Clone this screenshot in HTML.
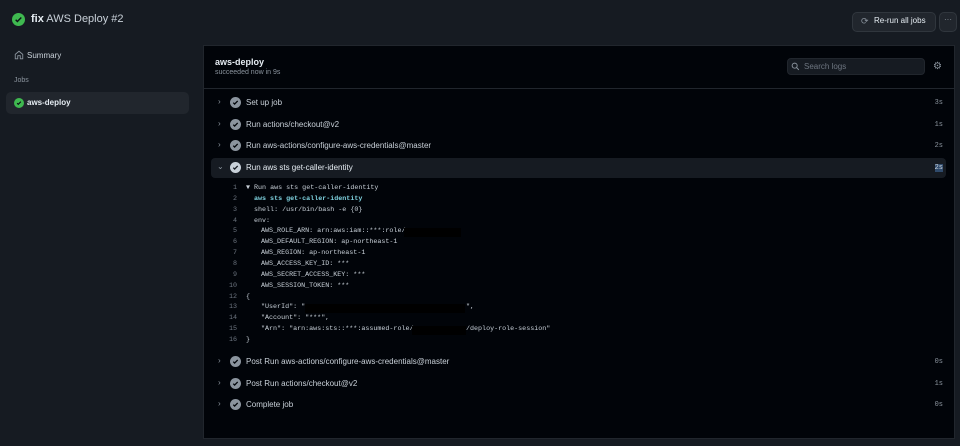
<html><head><style>
body{margin:0;width:960px;height:446px;background:#161b22;font-family:"Liberation Sans",sans-serif;color:#e6edf3;position:relative;overflow:hidden}
.a{position:absolute;white-space:nowrap}
.chk{position:absolute;width:11px;height:11px;border-radius:50%;background:#8b949e}
.chk svg{position:absolute;left:2px;top:2px}
.step{font-size:8px;color:#c9d1d9}
.dur{font-size:7px;color:#8b949e;font-family:"Liberation Mono",monospace;right:17px}
.ln{font-family:"Liberation Mono",monospace;font-size:6.7px;color:#c9d1d9}
.num{font-family:"Liberation Mono",monospace;font-size:6.7px;color:#6e7681;width:16px;text-align:right;left:221px}
.red{position:absolute;background:#000;height:9px}
</style></head><body>
<div class="chk" style="left:12px;top:13px;width:13px;height:13px;background:#3fb950"><svg width="9" height="9" viewBox="0 0 16 16"><path d="M3 8.5l3 3 7-7" stroke="#0d1117" stroke-width="2.5" fill="none"/></svg></div>
<div class="a" style="left:31px;top:13px;font-size:11px;color:#c9d1d9"><b style="color:#e6edf3">fix</b> AWS Deploy #2</div>
<svg class="a" style="left:14px;top:50px" width="10" height="10" viewBox="0 0 16 16"><path d="M2 7l6-5 6 5v7H10V9H6v5H2z" stroke="#8b949e" stroke-width="1.4" fill="none"/></svg>
<div class="a" style="left:27px;top:51px;font-size:8px;color:#c9d1d9">Summary</div>
<div class="a" style="left:14px;top:77px;font-size:7px;color:#8b949e">Jobs</div>
<div class="a" style="left:6px;top:92px;width:183px;height:22px;background:#21262d;border-radius:5px"></div>
<div class="chk" style="left:14px;top:98px;width:10px;height:10px;background:#3fb950"><svg width="6" height="6" viewBox="0 0 16 16"><path d="M3 8.5l3 3 7-7" stroke="#0d1117" stroke-width="3" fill="none"/></svg></div>
<div class="a" style="left:27px;top:98px;font-size:8px;font-weight:bold;color:#e6edf3">aws-deploy</div>
<div class="a" style="left:852px;top:12px;width:82px;height:18px;background:#21262d;border:1px solid #30363d;border-radius:5px"></div>
<div class="a" style="left:861px;top:16px;font-size:9px;color:#8b949e">⟳</div>
<div class="a" style="left:874px;top:16px;font-size:8px;color:#e6edf3">Re-run all jobs</div>
<div class="a" style="left:939px;top:12px;width:16px;height:18px;background:#21262d;border:1px solid #30363d;border-radius:5px;font-size:8px;color:#8b949e;text-align:center;line-height:14px">···</div>
<div class="a" style="left:203px;top:45px;width:752px;height:394px;background:#010409;border:1px solid #21262d;box-sizing:border-box"></div>
<div class="a" style="left:203px;top:88px;width:752px;height:1px;background:#21262d"></div>
<div class="a" style="left:215px;top:57px;font-size:9px;font-weight:bold;color:#e6edf3">aws-deploy</div>
<div class="a" style="left:215px;top:69px;font-size:7px;color:#8b949e">succeeded now in 9s</div>
<div class="a" style="left:787px;top:58px;width:138px;height:17px;background:#161b22;border:1px solid #21262d;border-radius:4px;box-sizing:border-box"></div>
<svg class="a" style="left:791px;top:62px" width="9" height="9" viewBox="0 0 16 16"><circle cx="6.5" cy="6.5" r="4.5" stroke="#8b949e" stroke-width="1.6" fill="none"/><path d="M10 10l4 4" stroke="#8b949e" stroke-width="1.6"/></svg>
<div class="a" style="left:804px;top:62px;font-size:8px;color:#6e7681">Search logs</div>
<div class="a" style="left:933px;top:61px;font-size:10px;color:#8b949e">⚙</div>
<div class="a" style="left:211px;top:158px;width:735px;height:20px;background:#161b22;border-radius:4px"></div>
<div class="a step" style="left:218px;top:97px;color:#8b949e">›</div><div class="chk" style="left:230px;top:97px"><svg width="7" height="7" viewBox="0 0 16 16"><path d="M3 8.5l3 3 7-7" stroke="#010409" stroke-width="3" fill="none"/></svg></div><div class="a step" style="left:246px;top:98px">Set up job</div><div class="a dur" style="top:99px">3s</div>
<div class="a step" style="left:218px;top:119px;color:#8b949e">›</div><div class="chk" style="left:230px;top:119px"><svg width="7" height="7" viewBox="0 0 16 16"><path d="M3 8.5l3 3 7-7" stroke="#010409" stroke-width="3" fill="none"/></svg></div><div class="a step" style="left:246px;top:120px">Run actions/checkout@v2</div><div class="a dur" style="top:121px">1s</div>
<div class="a step" style="left:218px;top:140px;color:#8b949e">›</div><div class="chk" style="left:230px;top:140px"><svg width="7" height="7" viewBox="0 0 16 16"><path d="M3 8.5l3 3 7-7" stroke="#010409" stroke-width="3" fill="none"/></svg></div><div class="a step" style="left:246px;top:141px">Run aws-actions/configure-aws-credentials@master</div><div class="a dur" style="top:142px">2s</div>
<div class="a step" style="left:217px;top:162px;color:#8b949e">⌄</div><div class="chk" style="left:230px;top:162px;background:#c9d1d9"><svg width="7" height="7" viewBox="0 0 16 16"><path d="M3 8.5l3 3 7-7" stroke="#161b22" stroke-width="3" fill="none"/></svg></div><div class="a step" style="left:246px;top:163px;color:#e6edf3">Run aws sts get-caller-identity</div><div class="a dur" style="top:164px;background:#2f4a6b;color:#c9d1d9">2s</div>
<div class="a num" style="top:184px">1</div><div class="a ln" style="left:246px;top:184px">▼ Run aws sts get-caller-identity</div>
<div class="a num" style="top:195px">2</div><div class="a ln" style="left:254px;top:195px;color:#7fd3e0;font-weight:bold">aws sts get-caller-identity</div>
<div class="a num" style="top:206px">3</div><div class="a ln" style="left:254px;top:206px">shell: /usr/bin/bash -e {0}</div>
<div class="a num" style="top:217px">4</div><div class="a ln" style="left:254px;top:217px">env:</div>
<div class="a num" style="top:227px">5</div><div class="a ln" style="left:261px;top:227px">AWS_ROLE_ARN: arn:aws:iam::***:role/</div><div class="red" style="left:404px;top:228px;width:57px"></div>
<div class="a num" style="top:238px">6</div><div class="a ln" style="left:261px;top:238px">AWS_DEFAULT_REGION: ap-northeast-1</div>
<div class="a num" style="top:249px">7</div><div class="a ln" style="left:261px;top:249px">AWS_REGION: ap-northeast-1</div>
<div class="a num" style="top:260px">8</div><div class="a ln" style="left:261px;top:260px">AWS_ACCESS_KEY_ID: ***</div>
<div class="a num" style="top:271px">9</div><div class="a ln" style="left:261px;top:271px">AWS_SECRET_ACCESS_KEY: ***</div>
<div class="a num" style="top:282px">10</div><div class="a ln" style="left:261px;top:282px">AWS_SESSION_TOKEN: ***</div>
<div class="a num" style="top:293px">12</div><div class="a ln" style="left:246px;top:293px">{</div>
<div class="a num" style="top:303px">13</div><div class="a ln" style="left:261px;top:303px">"UserId": "</div><div class="red" style="left:305px;top:304px;width:160px"></div><div class="a ln" style="left:466px;top:303px">",</div>
<div class="a num" style="top:314px">14</div><div class="a ln" style="left:261px;top:314px">"Account": "***",</div>
<div class="a num" style="top:325px">15</div><div class="a ln" style="left:261px;top:325px">"Arn": "arn:aws:sts::***:assumed-role/</div><div class="red" style="left:412px;top:326px;width:54px"></div><div class="a ln" style="left:466px;top:325px">/deploy-role-session"</div>
<div class="a num" style="top:336px">16</div><div class="a ln" style="left:246px;top:336px">}</div>
<div class="a step" style="left:218px;top:356px;color:#8b949e">›</div><div class="chk" style="left:230px;top:356px"><svg width="7" height="7" viewBox="0 0 16 16"><path d="M3 8.5l3 3 7-7" stroke="#010409" stroke-width="3" fill="none"/></svg></div><div class="a step" style="left:246px;top:357px">Post Run aws-actions/configure-aws-credentials@master</div><div class="a dur" style="top:358px">0s</div>
<div class="a step" style="left:218px;top:378px;color:#8b949e">›</div><div class="chk" style="left:230px;top:378px"><svg width="7" height="7" viewBox="0 0 16 16"><path d="M3 8.5l3 3 7-7" stroke="#010409" stroke-width="3" fill="none"/></svg></div><div class="a step" style="left:246px;top:379px">Post Run actions/checkout@v2</div><div class="a dur" style="top:380px">1s</div>
<div class="a step" style="left:218px;top:399px;color:#8b949e">›</div><div class="chk" style="left:230px;top:399px"><svg width="7" height="7" viewBox="0 0 16 16"><path d="M3 8.5l3 3 7-7" stroke="#010409" stroke-width="3" fill="none"/></svg></div><div class="a step" style="left:246px;top:400px">Complete job</div><div class="a dur" style="top:401px">0s</div>
</body></html>
